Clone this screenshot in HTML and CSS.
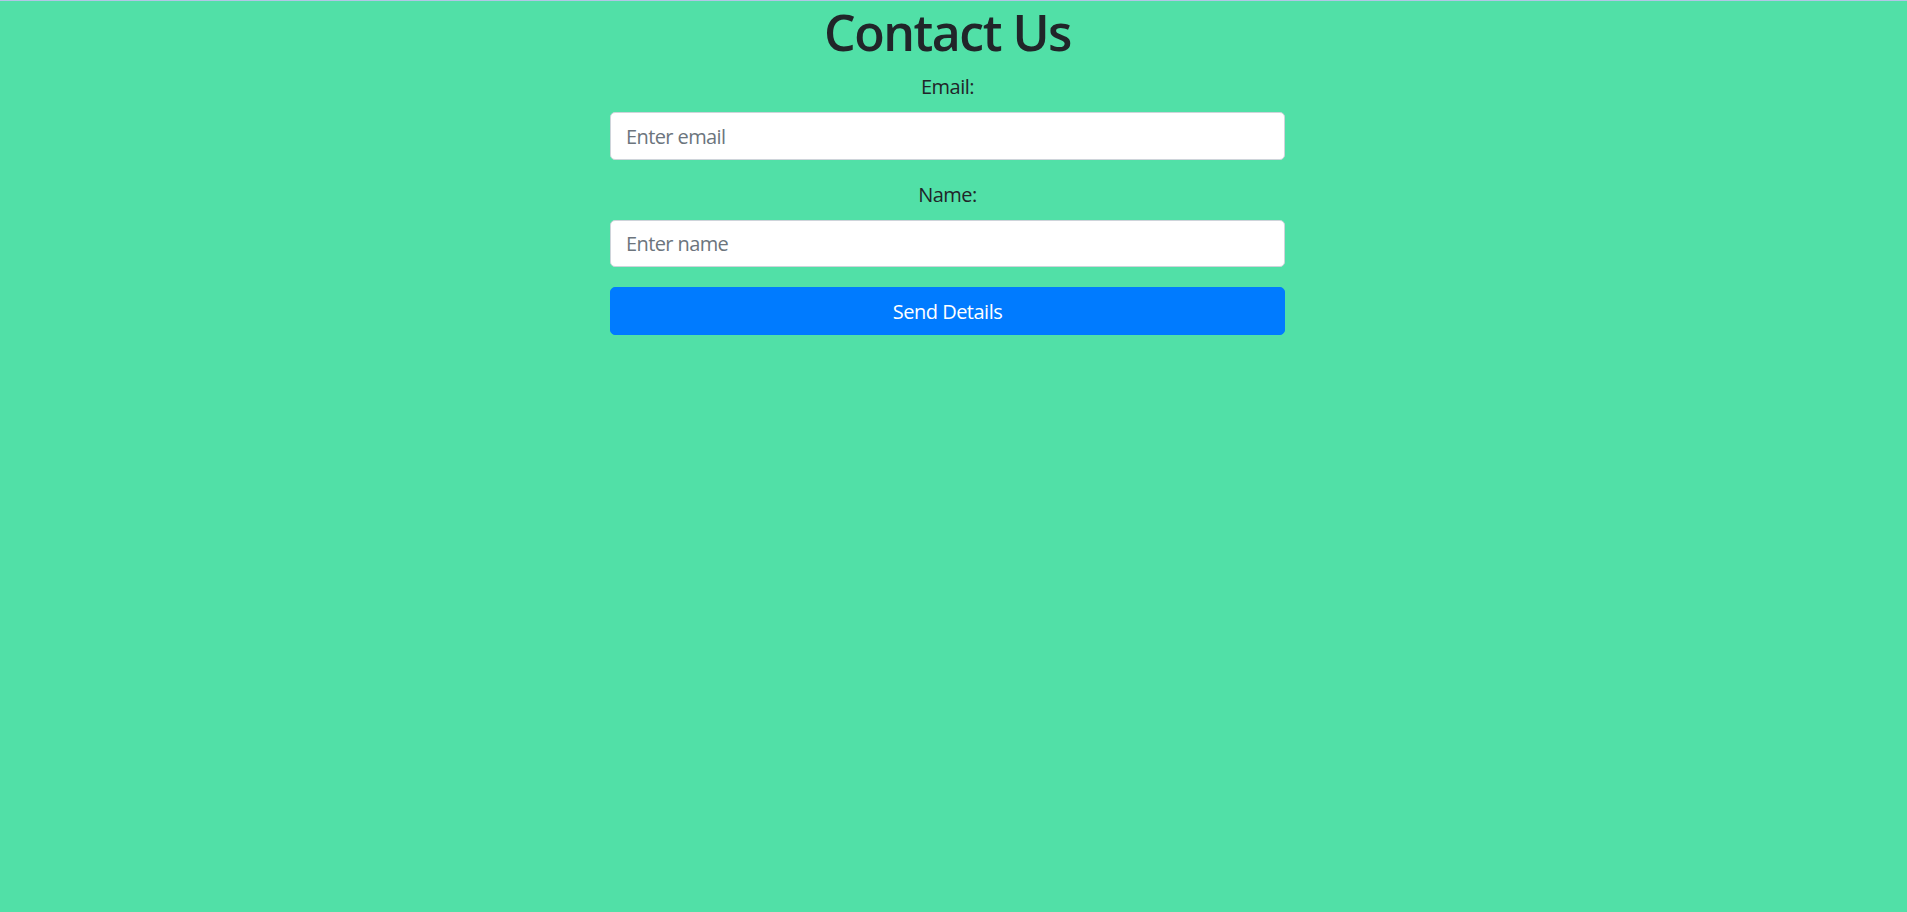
FILE: index.html
```html
<!DOCTYPE html>
<html lang="en">
<head>
<meta charset="utf-8">
<title>Contact Us</title>
<link rel="stylesheet" href="styles.css">
</head>
<body>
<div class="page">
  <form class="contact">
    <h1 class="title">Contact Us</h1>
    <div class="group">
      <label class="label" for="email">Email:</label>
      <input class="field" type="email" id="email" placeholder="Enter email">
    </div>
    <div class="group">
      <label class="label" for="name">Name:</label>
      <input class="field" type="text" id="name" placeholder="Enter name">
    </div>
    <button class="send" type="button">Send Details</button>
  </form>
</div>
</body>
</html>
```

FILE: styles.css
```css
html, body {
  margin: 0;
  padding: 0;
}
body {
  background: #51e0a7;
  border-top: 1px solid #b3c6e6;
  min-height: 911px;
  font-family: "Open Sans", "Noto Sans", sans-serif;
  color: #212529;
}
.page {
  display: flex;
  justify-content: center;
  padding: 1px 12px 0 0;
}
.contact {
  width: 675px;
  text-align: center;
  margin: 0;
}
.title {
  font-size: 50px;
  line-height: 60px;
  font-weight: 600;
  letter-spacing: -1.5px;
  margin: 0 0 10px;
}
.group {
  margin-bottom: 20px;
}
.label {
  display: inline-block;
  font-size: 20px;
  line-height: 30px;
  letter-spacing: -0.5px;
  margin-bottom: 10px;
}
.field {
  display: block;
  box-sizing: border-box;
  width: 100%;
  height: 47.5px;
  padding: 8px 15px 7px;
  font-family: inherit;
  font-size: 20px;
  letter-spacing: -0.6px;
  color: #495057;
  background: #fff;
  border: 1px solid #ced4da;
  border-radius: 5px;
  outline: none;
}
.field::placeholder {
  color: #6c757d;
  opacity: 1;
}
.send {
  display: block;
  box-sizing: border-box;
  width: 100%;
  height: 47.5px;
  padding: 8px 15px 7px;
  font-family: inherit;
  font-size: 20px;
  letter-spacing: -0.5px;
  color: #fff;
  background: #007bff;
  border: 1px solid #007bff;
  border-radius: 5px;
  cursor: pointer;
}
```
